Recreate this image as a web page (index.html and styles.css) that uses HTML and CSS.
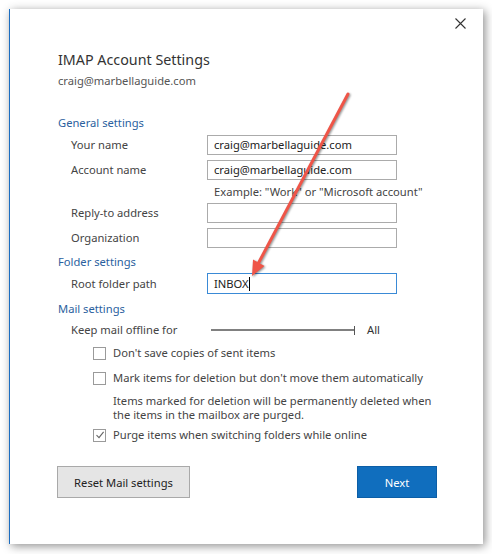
FILE: index.html
```html
<!DOCTYPE html>
<html>
<head>
<meta charset="utf-8">
<link rel="stylesheet" href="styles.css">
</head>
<body>
<div class="dialog">
  <div class="titlebar">
    <svg class="close" width="11" height="11" viewBox="0 0 11 11"><path d="M0.5 0.5 L10.5 10.5 M10.5 0.5 L0.5 10.5" stroke="#333" stroke-width="1.1" fill="none"/></svg>
  </div>
  <div class="content">
    <div class="title">IMAP Account Settings</div>
    <div class="account">craig@marbellaguide.com</div>

    <div class="heading h-general">General settings</div>
    <div class="form">
      <div class="label">Your name</div>
      <div class="input">craig@marbellaguide.com</div>
      <div class="label">Account name</div>
      <div class="input">craig@marbellaguide.com</div>
      <div></div>
      <div class="example">Example: "Work" or "Microsoft account"</div>
      <div class="label">Reply-to address</div>
      <div class="input"></div>
      <div class="label">Organization</div>
      <div class="input"></div>
    </div>

    <div class="heading h-folder">Folder settings</div>
    <div class="form form-folder">
      <div class="label">Root folder path</div>
      <div class="input focused">INBOX<span class="caret"></span></div>
    </div>

    <div class="heading h-mail">Mail settings</div>
    <div class="offline">
      <div class="label">Keep mail offline for</div>
      <div class="slider"><span class="track"></span><span class="tick"></span></div>
      <div class="slider-value">All</div>
    </div>

    <div class="check c1"><span class="box"></span><span>Don't save copies of sent items</span></div>
    <div class="check c2"><span class="box"></span><span>Mark items for deletion but don't move them automatically</span></div>
    <div class="desc">Items marked for deletion will be permanently deleted when<br>the items in the mailbox are purged.</div>
    <div class="check c3"><span class="box checked"><svg width="10" height="10" viewBox="0 0 10 10"><path d="M1.5 5.2 L4 7.6 L8.6 1.8" stroke="#666" stroke-width="1.1" fill="none"/></svg></span><span>Purge items when switching folders while online</span></div>

    <div class="buttons">
      <div class="btn reset">Reset Mail settings</div>
      <div class="btn next">Next</div>
    </div>
  </div>
</div>
<svg class="arrow" width="492" height="554" viewBox="0 0 492 554">
  <g class="arrow-g">
    <line x1="348" y1="94" x2="258.5" y2="263" stroke="#ef5548" stroke-width="3" stroke-linecap="round"/>
    <polygon points="252,276 264.5,266 253,259.5" fill="#ef5548"/>
  </g>
</svg>
</body>
</html>
```

FILE: styles.css
```css
html, body {
  margin: 0;
  padding: 0;
  background: #ffffff;
}
body {
  width: 492px;
  height: 554px;
  position: relative;
  overflow: hidden;
  font-family: "Noto Sans", "Open Sans", sans-serif;
  font-size: 11.2px;
  color: #444;
}
.dialog {
  margin: 9px 0 0 9px;
  width: 473px;
  height: 535px;
  background: #fff;
  border-left: 1px solid #1c6dc0;
  box-shadow: 2px 2px 9px rgba(0,0,0,0.45);
}
.titlebar {
  display: flex;
  justify-content: flex-end;
  padding: 9px 17px 0 0;
  height: 11px;
}
.close { display: block; }
.content {
  padding-left: 48px;
}
.title {
  margin-top: 20px;
  font-size: 14.3px;
  line-height: 22px;
  color: #333;
}
.account {
  margin-top: 2px;
  line-height: 16px;
  color: #555;
}
.heading {
  color: #2b5f9e;
  line-height: 16px;
}
.h-general { margin-top: 26px; }
.h-folder { margin-top: 6px; }
.h-mail { margin-top: 7px; }
.form {
  display: grid;
  grid-template-columns: 136px 190px;
  row-gap: 5px;
  margin-top: 4px;
  padding-left: 13px;
  align-items: center;
}
.form-folder { margin-top: 3px; }
.label {
  color: #444;
  line-height: 16px;
  white-space: nowrap;
}
.input {
  height: 20px;
  box-sizing: border-box;
  border: 1px solid #ababab;
  padding-left: 6px;
  line-height: 18px;
  color: #222;
  display: flex;
  align-items: center;
}
.input.focused {
  height: 21px;
  border-color: #3a8ad6;
}
.caret {
  display: inline-block;
  width: 1px;
  height: 14px;
  background: #000;
}
.example {
  padding-left: 7px;
  line-height: 13px;
  color: #444;
  white-space: nowrap;
}
.offline {
  display: flex;
  align-items: center;
  margin-top: 5px;
  padding-left: 13px;
}
.offline .label { width: 140px; }
.slider {
  position: relative;
  width: 144px;
  height: 9px;
  display: flex;
  align-items: center;
}
.track {
  display: block;
  width: 143px;
  height: 2px;
  background: #808080;
}
.tick {
  display: block;
  width: 1px;
  height: 9px;
  background: #555;
}
.slider-value {
  margin-left: 12px;
  color: #333;
  line-height: 16px;
}
.check {
  display: flex;
  align-items: center;
  padding-left: 35px;
  line-height: 16px;
  color: #444;
  white-space: nowrap;
}
.c1 { margin-top: 7px; }
.c2 { margin-top: 9px; }
.c3 { margin-top: 5px; }
.box {
  width: 11px;
  height: 11px;
  border: 1px solid #9a9a9a;
  margin-right: 7px;
  display: flex;
  align-items: center;
  justify-content: center;
  flex: none;
}
.desc {
  margin-top: 8px;
  padding-left: 55px;
  line-height: 14px;
  color: #444;
  white-space: nowrap;
}
.buttons {
  display: flex;
  justify-content: space-between;
  margin-top: 23px;
  margin-left: -1px;
  width: 380px;
}
.btn {
  height: 32px;
  box-sizing: border-box;
  display: flex;
  align-items: center;
  justify-content: center;
  font-size: 11.2px;
}
.reset {
  width: 133px;
  background: #e5e5e5;
  border: 1px solid #a9a9a9;
  color: #222;
}
.next {
  width: 80px;
  background: #106ebe;
  border: 1px solid #0c5ea6;
  color: #fff;
}
.arrow {
  position: absolute;
  left: 0;
  top: 0;
  pointer-events: none;
}
.arrow-g {
  filter: drop-shadow(1px 1px 1px rgba(0,0,0,0.45));
}
```
